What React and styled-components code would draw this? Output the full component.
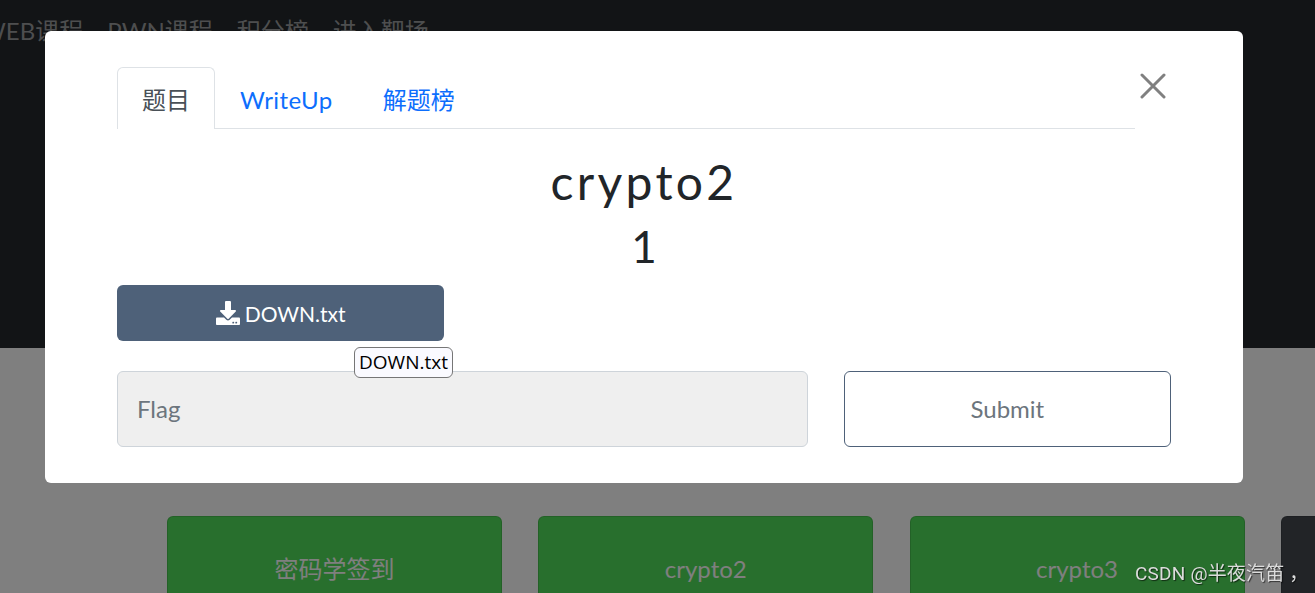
import React from "react";
import styled, { createGlobalStyle } from "styled-components";
import { FaDownload } from "react-icons/fa";

const GlobalStyle = createGlobalStyle`
  html, body {
    margin: 0;
    height: 100%;
    overflow: hidden;
    background: #fff;
    font-family: Lato, "Noto Sans CJK SC", sans-serif;
  }
`;

const Header = styled.header`
  height: 348px;
  background: #24282c;
`;

const Nav = styled.nav`
  display: flex;
  gap: 24px;
  margin-left: -19px;
  padding-top: 13px;
  font-size: 24px;
  line-height: 36px;
  color: #9b9d9e;
  white-space: nowrap;
`;

const CardRow = styled.section`
  display: flex;
  gap: 36.25px;
  padding: 168px 0 0 167px;
  width: 1400px;
`;

const Card = styled.div`
  flex: 0 0 335px;
  height: 160px;
  box-sizing: border-box;
  padding-top: 34px;
  border: 1px solid rgba(0, 0, 0, 0.125);
  border-radius: 6px;
  background: ${(p) => (p.$dark ? "#44494f" : "#50de5a")};
  color: #fff;
  font-size: 24px;
  line-height: 36px;
  text-align: center;
`;

const Backdrop = styled.div`
  position: fixed;
  inset: 0;
  padding: 31px 0 0 45px;
  background: rgba(0, 0, 0, 0.5);
`;

const Modal = styled.div`
  position: relative;
  box-sizing: border-box;
  width: 1198px;
  height: 452px;
  padding: 36px 72px;
  background: #fff;
  border-radius: 6px;
  color: #212529;
`;

const TabBar = styled.div`
  display: flex;
  width: 1018px;
  height: 62px;
  box-sizing: border-box;
  border-bottom: 1px solid #dee2e6;
`;

const Tab = styled.a`
  box-sizing: border-box;
  height: 62px;
  padding: 14px 24px 0;
  font-size: 24px;
  line-height: 36px;
  letter-spacing: ${(p) => (p.$latin ? "0.4px" : "0")};
  color: ${(p) => (p.$active ? "#495057" : "#0d6efd")};
  background: ${(p) => (p.$active ? "#fff" : "transparent")};
  border: 1px solid ${(p) => (p.$active ? "#dee2e6" : "transparent")};
  border-bottom: 0;
  border-radius: 6px 6px 0 0;
`;

const CloseButton = styled.button`
  position: absolute;
  top: 42px;
  right: 77px;
  display: flex;
  padding: 0;
  border: 0;
  background: none;
`;

const Title = styled.h1`
  margin: 20px 0 0;
  font-size: 48px;
  font-weight: 400;
  line-height: 66px;
  letter-spacing: 3.3px;
  text-align: center;
`;

const Score = styled.div`
  margin-top: -2px;
  font-size: 44px;
  font-weight: 400;
  line-height: 66px;
  text-align: center;
`;

const FormGrid = styled.div`
  display: grid;
  grid-template-columns: repeat(3, 1fr);
  column-gap: 36px;
  row-gap: 30px;
  margin-top: 6px;
`;

const DownloadButton = styled.button`
  position: relative;
  grid-column: 1 / 2;
  display: flex;
  align-items: center;
  justify-content: center;
  gap: 5px;
  height: 56px;
  padding: 0;
  border: 0;
  border-radius: 6px;
  background: #4e6179;
  color: #fff;
  font-family: inherit;
  font-size: 21px;
`;

const Tooltip = styled.span`
  position: absolute;
  top: 62px;
  left: 237px;
  box-sizing: border-box;
  width: 99px;
  height: 31px;
  border: 1px solid #767676;
  border-radius: 6px;
  background: #fafaff;
  color: #000;
  font-family: "Open Sans", sans-serif;
  font-size: 19px;
  line-height: 28px;
  text-align: center;
  white-space: nowrap;
`;

const FlagInput = styled.input`
  grid-column: 1 / 3;
  box-sizing: border-box;
  height: 76px;
  padding: 0 19px 2px;
  border: 1px solid #ced4da;
  border-radius: 6px;
  background: #efefef;
  font-family: inherit;
  font-size: 24px;
  &::placeholder {
    color: #6c757d;
    opacity: 1;
  }
`;

const SubmitButton = styled.button`
  height: 76px;
  padding: 0 0 2px;
  border: 1px solid #4e6179;
  border-radius: 6px;
  background: #fff;
  color: #6c757d;
  font-family: inherit;
  font-size: 24px;
`;

const Watermark = styled.div`
  position: fixed;
  left: 1135px;
  top: 560px;
  color: #dcdcdc;
  font-family: Roboto, "Noto Sans CJK SC", sans-serif;
  font-size: 19px;
  line-height: 27px;
  letter-spacing: 0.2px;
  white-space: nowrap;
  text-shadow: 1px 1px 1px rgba(0, 0, 0, 0.6);
`;

const App = () => {
  return (
    <>
      <GlobalStyle />
      <Header>
        <Nav>
          <span>WEB课程</span>
          <span>PWN课程</span>
          <span>积分榜</span>
          <span>进入靶场</span>
        </Nav>
      </Header>
      <CardRow>
        <Card>密码学签到</Card>
        <Card>crypto2</Card>
        <Card>crypto3</Card>
        <Card $dark />
      </CardRow>
      <Backdrop>
        <Modal>
          <TabBar>
            <Tab $active>题目</Tab>
            <Tab $latin>WriteUp</Tab>
            <Tab>解题榜</Tab>
          </TabBar>
          <CloseButton aria-label="close">
            <svg width="26" height="26" viewBox="0 0 26 26">
              <path d="M2 2 L24 24 M24 2 L2 24" stroke="#808080" strokeWidth="3" strokeLinecap="round" />
            </svg>
          </CloseButton>
          <Title>crypto2</Title>
          <Score>1</Score>
          <FormGrid>
            <DownloadButton>
              <FaDownload size={24} />
              DOWN.txt
              <Tooltip>DOWN.txt</Tooltip>
            </DownloadButton>
            <FlagInput placeholder="Flag" />
            <SubmitButton>Submit</SubmitButton>
          </FormGrid>
        </Modal>
      </Backdrop>
      <Watermark>CSDN @半夜汽笛 ，</Watermark>
    </>
  );
};

export default App;
